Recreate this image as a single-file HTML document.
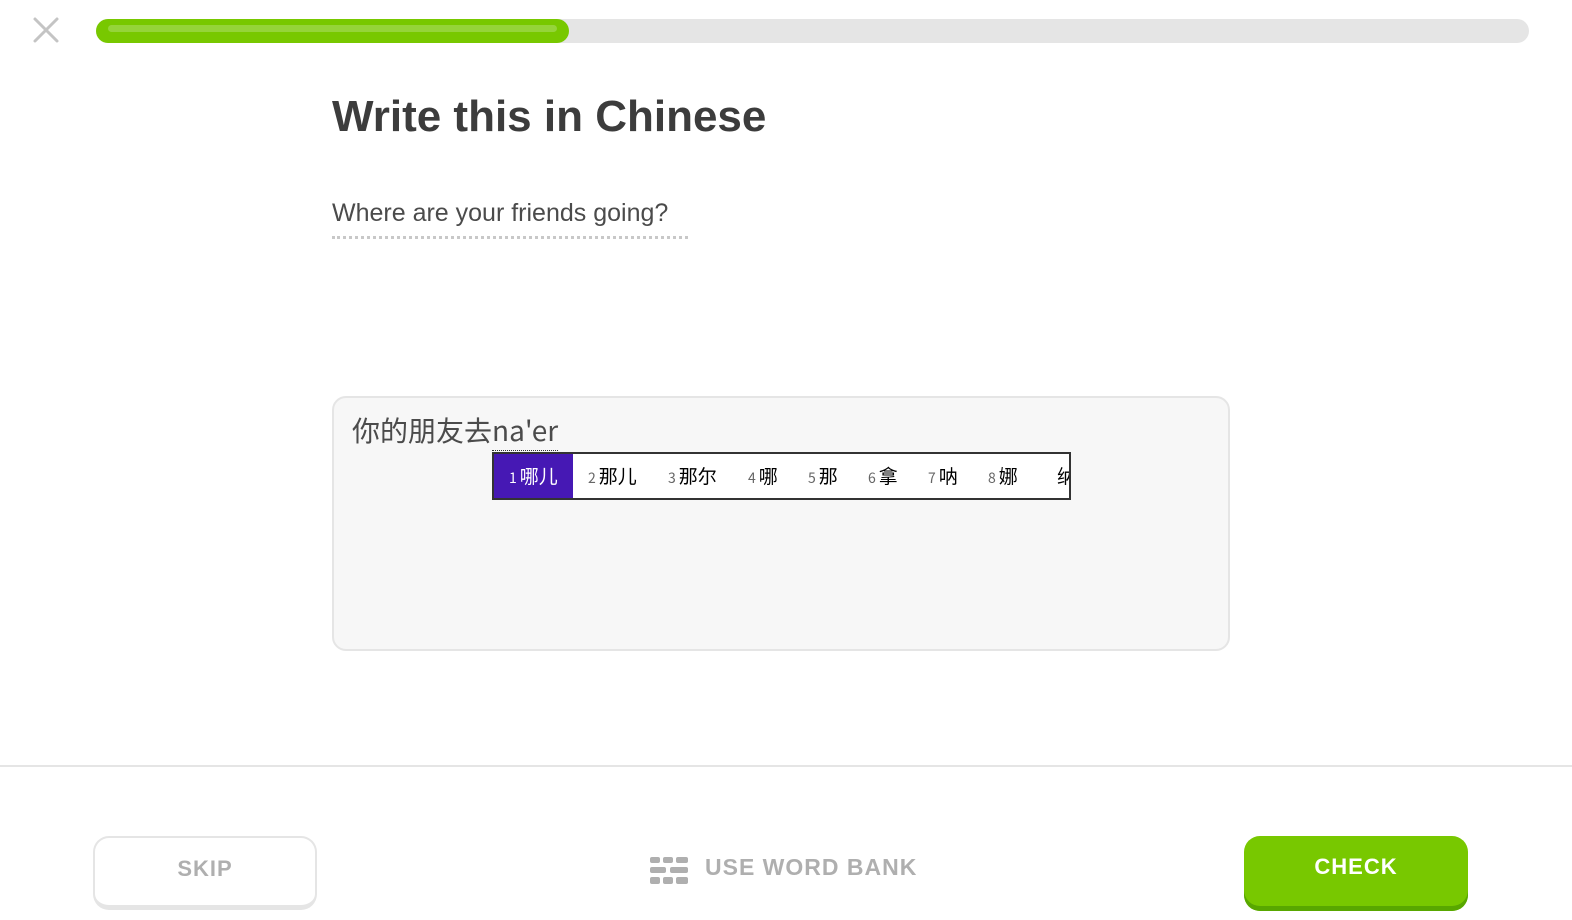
<!DOCTYPE html>
<html><head><meta charset="utf-8"><style>
*{margin:0;padding:0;box-sizing:border-box}
body{width:1572px;height:920px;background:#fff;position:relative;overflow:hidden;font-family:"Liberation Sans","Noto Sans CJK SC",sans-serif}
.abs{position:absolute}
small{font-size:14px;color:#666;margin-right:3px}
</style></head><body>
<svg class="abs" style="left:32px;top:16px" width="28" height="28" viewBox="0 0 28 28"><path d="M3 3L25 25M25 3L3 25" stroke="#c4c4c4" stroke-width="3" stroke-linecap="round"/></svg>
<div class="abs" style="left:96px;top:19px;width:1433px;height:24px;border-radius:12px;background:#e5e5e5"></div>
<div class="abs" style="left:96px;top:19px;width:473px;height:24px;border-radius:12px;background:#78c800"></div>
<div class="abs" style="left:108px;top:25px;width:449px;height:7px;border-radius:4px;background:#95d43a"></div>
<div class="abs" style="left:332px;top:92px;font-size:44px;font-weight:bold;color:#3c3c3c">Write this in Chinese</div>
<div class="abs" style="left:332px;top:199px;font-size:25px;color:#4b4b4b">Where are your friends going?</div>
<div class="abs" style="left:332px;top:236px;width:356px;border-top:3px dotted #c8c8c8"></div>
<div class="abs" style="left:332px;top:396px;width:898px;height:255px;background:#f7f7f7;border:2px solid #e5e5e5;border-radius:14px"></div>
<div class="abs" style="left:352px;top:411px;font-size:28px;color:#4b4b4b;font-family:'Noto Sans CJK SC','Liberation Sans',sans-serif;line-height:38px">你的朋友去<span style="border-bottom:1px dotted #333">na'er</span></div>
<div class="abs" style="left:492px;top:452px;width:579px;height:48px;background:#fff;border:2px solid #333;overflow:hidden;font-family:'Noto Sans CJK SC',sans-serif;font-size:19px;color:#000;white-space:nowrap">
<div class="abs" style="left:0;top:0;width:79px;height:44px;background:#4618b4"></div>
<div class="abs" style="left:15px;top:8px;color:#fff"><small style="color:#fff">1</small>哪儿</div>
<div class="abs" style="left:94px;top:8px"><small>2</small>那儿</div>
<div class="abs" style="left:174px;top:8px"><small>3</small>那尔</div>
<div class="abs" style="left:254px;top:8px"><small>4</small>哪</div>
<div class="abs" style="left:314px;top:8px"><small>5</small>那</div>
<div class="abs" style="left:374px;top:8px"><small>6</small>拿</div>
<div class="abs" style="left:434px;top:8px"><small>7</small>呐</div>
<div class="abs" style="left:494px;top:8px"><small>8</small>娜</div>
<div class="abs" style="left:563px;top:8px">纳</div>
</div>
<div class="abs" style="left:0;top:765px;width:1572px;border-top:2px solid #e5e5e5"></div>
<div class="abs" style="left:93px;top:836px;width:224px;height:74px;border:2px solid #e5e5e5;border-bottom-width:5px;border-radius:16px;text-align:center;line-height:62px;font-size:22px;font-weight:bold;color:#afafaf;letter-spacing:1px">SKIP</div>
<svg class="abs" style="left:649px;top:856px" width="40" height="30"><g fill="#afafaf"><rect x="1" y="1" width="10" height="6" rx="2"/><rect x="14" y="1" width="10" height="6" rx="2"/><rect x="27" y="1" width="12" height="6" rx="2"/><rect x="1" y="11" width="16" height="6" rx="2"/><rect x="21" y="11" width="18" height="6" rx="2"/><rect x="1" y="21" width="10" height="7" rx="2"/><rect x="14" y="21" width="10" height="7" rx="2"/><rect x="27" y="21" width="12" height="7" rx="2"/></g></svg>
<div class="abs" style="left:705px;top:854px;font-size:23px;font-weight:bold;color:#afafaf;letter-spacing:1px">USE WORD BANK</div>
<div class="abs" style="left:1244px;top:836px;width:224px;height:75px;background:#78c800;border-radius:16px;box-shadow:inset 0 -5px 0 #58a700;text-align:center;line-height:62px;font-size:22px;font-weight:bold;color:#fff;letter-spacing:1px">CHECK</div>
</body></html>
